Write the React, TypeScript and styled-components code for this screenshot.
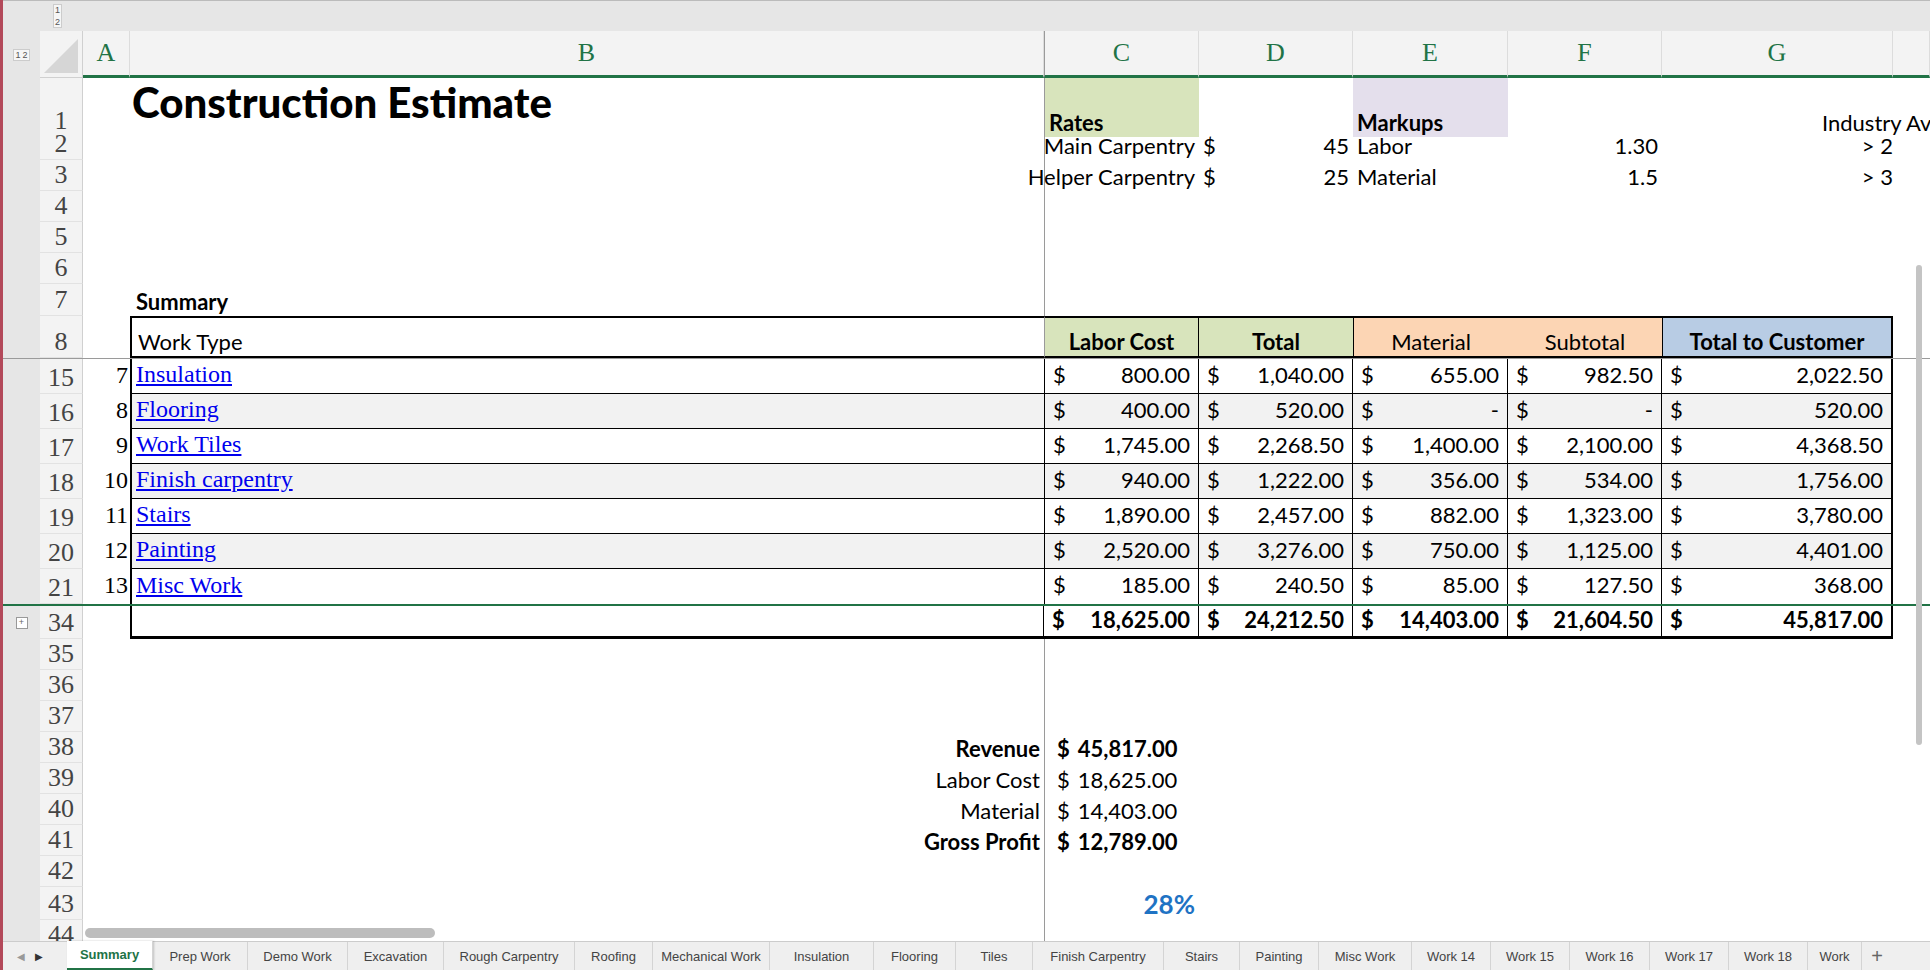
import React from "react";
import styled, { createGlobalStyle, css } from "styled-components";

const Global = createGlobalStyle`
  html, body { margin: 0; padding: 0; background: #fff; overflow: hidden; }
  body { font-family: Lato, "Liberation Sans", sans-serif; }
`;

const COLS = "37px 43px 47px 914px 155px 154px 155px 154px 231px 1fr";

const Page = styled.div`
  position: relative;
  width: 1930px;
  height: 970px;
  overflow: hidden;
  display: flex;
  flex-direction: column;
  border-left: 3px solid #b3495a;
  box-sizing: border-box;
`;

const TopBar = styled.div`
  height: 31px;
  flex: none;
  background: #e6e6e6;
  border-top: 1px solid #bbb;
  display: flex;
  align-items: center;
  padding-left: 50px;
  box-sizing: border-box;
`;

const LevelBox = styled.div<{ $col?: boolean }>`
  font: 9px "Liberation Sans", sans-serif;
  color: #555;
  display: flex;
  flex-direction: ${(p) => (p.$col ? "column" : "row")};
  border: 1px solid #ccc;
  background: #f6f6f6;
  line-height: 10px;
  padding: 0 1px;
  gap: 2px;
`;

const Row = styled.div<{ $h: number; $line?: string }>`
  display: grid;
  grid-template-columns: ${COLS};
  height: ${(p) => p.$h}px;
  flex: none;
  ${(p) => p.$line && css`border-bottom: ${p.$line};`}
`;

const Strip = styled.div`
  background: #e6e6e6;
  display: flex;
  align-items: center;
  justify-content: center;
`;

const RowNum = styled.div`
  background: #f3f3f3;
  border-right: 1px solid #d0d0d0;
  border-bottom: 1px solid #e2e2e2;
  font: 26px "Liberation Serif", serif;
  color: #444;
  display: flex;
  align-items: flex-end;
  justify-content: center;
  line-height: 1;
  padding-bottom: 2px;
  box-sizing: border-box;
  overflow: hidden;
`;

const ColHead = styled.div`
  background: #f3f3f3;
  border-right: 1px solid #dcdcdc;
  border-bottom: 3px solid #217346;
  font: 26px "Liberation Serif", serif;
  color: #217346;
  display: flex;
  align-items: center;
  justify-content: center;
  box-sizing: border-box;
`;

const Corner = styled.div`
  background: #f3f3f3;
  border-right: 1px solid #d0d0d0;
  border-bottom: 1px solid #d0d0d0;
  position: relative;
  box-sizing: border-box;
  &::after {
    content: "";
    position: absolute;
    right: 4px;
    bottom: 4px;
    border-left: 34px solid transparent;
    border-bottom: 34px solid #d6d6d6;
  }
`;

type CellP = {
  $bg?: string;
  $align?: "left" | "right" | "center" | "between";
  $bold?: boolean;
  $size?: number;
  $l?: string;
  $r?: string;
  $t?: string;
  $b?: string;
  $freeze?: boolean;
  $color?: string;
  $valign?: "end" | "center";
  $pad?: number;
  $gap?: number;
};

const Cell = styled.div<CellP>`
  position: relative;
  background: ${(p) => p.$bg || "transparent"};
  font-size: ${(p) => p.$size || 22}px;
  font-weight: ${(p) => (p.$bold ? 700 : 400)};
  color: ${(p) => p.$color || "#000"};
  display: flex;
  gap: ${(p) => p.$gap ?? 0}px;
  align-items: ${(p) => (p.$valign === "center" ? "center" : "flex-end")};
  justify-content: ${(p) =>
    p.$align === "right" ? "flex-end" : p.$align === "center" ? "center" : p.$align === "between" ? "space-between" : "flex-start"};
  padding: 0 ${(p) => p.$pad ?? 6}px 3px;
  white-space: nowrap;
  box-sizing: border-box;
  line-height: 1;
  border-left: ${(p) => p.$l || (p.$freeze ? "1px solid #9a9a9a" : "none")};
  border-right: ${(p) => p.$r || "none"};
  border-top: ${(p) => p.$t || "none"};
  border-bottom: ${(p) => p.$b || "none"};
`;

const Title = styled.span`
  font-size: 42px;
  font-weight: 900;
  line-height: 1.15;
  padding-bottom: 8px;
`;

const Link = styled.a`
  font: 24px "Liberation Serif", serif;
  color: #0000ee;
  text-decoration: underline;
`;

const Idx = styled.span`
  font: 24px "Liberation Serif", serif;
`;

const Body = styled.div`
  flex: 1;
  overflow: hidden;
  display: flex;
  flex-direction: column;
`;

const TabBar = styled.div`
  height: 28px;
  flex: none;
  background: #efefef;
  border-top: 1px solid #ccc;
  display: flex;
  align-items: stretch;
  font: 13px "Liberation Sans", sans-serif;
  color: #444;
`;

const Arrows = styled.div`
  width: 64px;
  display: flex;
  align-items: center;
  gap: 10px;
  padding-left: 14px;
  box-sizing: border-box;
  color: #999;
  font-size: 10px;
`;

const Tab = styled.div<{ $w: number; $active?: boolean }>`
  width: ${(p) => p.$w}px;
  flex: none;
  display: flex;
  align-items: center;
  justify-content: center;
  border-right: 1px solid #d4d4d4;
  box-sizing: border-box;
  overflow: hidden;
  white-space: nowrap;
  ${(p) =>
    p.$active &&
    css`
      background: #fff;
      color: #217346;
      font-weight: 700;
      margin-top: -1px;
      border-bottom: 2px solid #217346;
      box-shadow: 1px 0 2px rgba(0, 0, 0, 0.2);
    `}
`;

const Plus = styled.div`
  width: 30px;
  display: flex;
  align-items: center;
  justify-content: center;
  font-size: 20px;
  color: #666;
`;

const VScroll = styled.div`
  position: absolute;
  right: 8px;
  top: 265px;
  width: 6px;
  height: 480px;
  border-radius: 3px;
  background: #c4c4c4;
`;

const HScroll = styled.div`
  position: absolute;
  left: 82px;
  top: 928px;
  width: 350px;
  height: 10px;
  border-radius: 5px;
  background: #bdbdbd;
`;

const GroupBtn = styled.div`
  width: 10px;
  height: 10px;
  border: 1px solid #999;
  font: 9px "Liberation Sans", sans-serif;
  line-height: 9px;
  text-align: center;
  color: #666;
  background: #fff;
`;

const THICK = "2px solid #000";
const THIN = "1px solid #000";

const data: [number, number, string, string[]][] = [
  [15, 7, "Insulation", ["800.00", "1,040.00", "655.00", "982.50", "2,022.50"]],
  [16, 8, "Flooring ", ["400.00", "520.00", "-  ", "-  ", "520.00"]],
  [17, 9, "Work Tiles", ["1,745.00", "2,268.50", "1,400.00", "2,100.00", "4,368.50"]],
  [18, 10, "Finish carpentry ", ["940.00", "1,222.00", "356.00", "534.00", "1,756.00"]],
  [19, 11, "Stairs ", ["1,890.00", "2,457.00", "882.00", "1,323.00", "3,780.00"]],
  [20, 12, "Painting", ["2,520.00", "3,276.00", "750.00", "1,125.00", "4,401.00"]],
  [21, 13, "Misc Work", ["185.00", "240.50", "85.00", "127.50", "368.00"]],
];

const tabs: [string, number][] = [
  ["Summary", 86], ["Prep Work", 95], ["Demo Work", 100], ["Excavation", 96], ["Rough Carpentry", 131],
  ["Roofing", 78], ["Mechanical Work", 117], ["Insulation", 104], ["Flooring", 82], ["Tiles", 77],
  ["Finish Carpentry", 131], ["Stairs", 76], ["Painting", 79], ["Misc Work", 93], ["Work 14", 79],
  ["Work 15", 79], ["Work 16", 80], ["Work 17", 79], ["Work 18", 79], ["Work", 54],
];

const Empty = ({ n, h = 31 }: { n: number; h?: number }) => (
  <Row $h={h}>
    <Strip />
    <RowNum>{n}</RowNum>
    <Cell />
    <Cell />
    <Cell $freeze />
    <Cell />
    <Cell />
    <Cell />
    <Cell />
    <Cell />
  </Row>
);

export default function App() {
  return (
    <Page>
      <Global />
      <TopBar>
        <LevelBox $col>
          <span>1</span>
          <span>2</span>
        </LevelBox>
      </TopBar>
      <Row $h={47}>
        <Strip>
          <LevelBox>
            <span>1</span>
            <span>2</span>
          </LevelBox>
        </Strip>
        <Corner />
        <ColHead>A</ColHead>
        <ColHead>B</ColHead>
        <ColHead style={{ borderLeft: "1px solid #9a9a9a" }}>C</ColHead>
        <ColHead>D</ColHead>
        <ColHead>E</ColHead>
        <ColHead>F</ColHead>
        <ColHead>G</ColHead>
        <ColHead />
      </Row>
      <Body>
        <Row $h={51}>
          <Strip />
          <RowNum>1</RowNum>
          <Cell />
          <Cell $valign="end" $pad={2}><Title>Construction Estimate</Title></Cell>
          <Cell $freeze $bg="#d8e4bc" $bold $pad={4}>Rates</Cell>
          <Cell />
          <Cell $bg="#e4dfec" $bold $pad={4}>Markups</Cell>
          <Cell />
          <Cell $pad={160}>Industry Averages</Cell>
          <Cell />
        </Row>
        <Row $h={31}>
          <Strip />
          <RowNum>2</RowNum>
          <Cell />
          <Cell />
          <Cell $freeze $align="right" $pad={4}>Main Carpentry</Cell>
          <Cell $align="between" $pad={4}><span>$</span><span>45</span></Cell>
          <Cell $pad={4}>Labor</Cell>
          <Cell $align="right" $pad={4}>1.30</Cell>
          <Cell $align="right" $pad={0}>&gt; 2</Cell>
          <Cell />
        </Row>
        <Row $h={31}>
          <Strip />
          <RowNum>3</RowNum>
          <Cell />
          <Cell />
          <Cell $freeze $align="right" $pad={4}>Helper Carpentry</Cell>
          <Cell $align="between" $pad={4}><span>$</span><span>25</span></Cell>
          <Cell $pad={4}>Material</Cell>
          <Cell $align="right" $pad={4}>1.5</Cell>
          <Cell $align="right" $pad={0}>&gt; 3</Cell>
          <Cell />
        </Row>
        <Empty n={4} />
        <Empty n={5} />
        <Empty n={6} />
        <Row $h={32}>
          <Strip />
          <RowNum>7</RowNum>
          <Cell />
          <Cell $bold $size={22}>Summary</Cell>
          <Cell $freeze />
          <Cell />
          <Cell />
          <Cell />
          <Cell />
          <Cell />
        </Row>
        <Row $h={42} $line="1px solid #9a9a9a">
          <Strip />
          <RowNum>8</RowNum>
          <Cell />
          <Cell $l={THICK} $t={THICK} $b={THICK}>Work Type</Cell>
          <Cell $freeze $bg="#d8e4bc" $bold $align="center" $t={THICK} $b={THICK} $r={THIN}>Labor Cost</Cell>
          <Cell $bg="#d8e4bc" $bold $align="center" $t={THICK} $b={THICK}>Total</Cell>
          <Cell $bg="#fcd5b4" $align="center" $t={THICK} $b={THICK} $l={THIN}>Material</Cell>
          <Cell $bg="#fcd5b4" $align="center" $t={THICK} $b={THICK}>Subtotal</Cell>
          <Cell $bg="#b8cce4" $bold $align="center" $t={THICK} $b={THICK} $l={THIN} $r={THICK}>Total to Customer</Cell>
          <Cell />
        </Row>
        {data.map(([n, i, name, vals], k) => {
          const bg = k % 2 === 1 ? "#f2f2f2" : undefined;
          const last = k === data.length - 1;
          return (
            <Row key={n} $h={35} $line={last ? "2px solid #217346" : undefined}>
              <Strip />
              <RowNum>{n}</RowNum>
              <Cell $align="right" $pad={2} $valign="center"><Idx>{i}</Idx></Cell>
              <Cell $l={THICK} $bg={bg} $b={last ? "none" : THIN} $pad={4} $valign="center"><Link>{name}</Link></Cell>
              {vals.map((v, j) => (
                <Cell key={j} $align="between" $bg={bg} $b={last ? "none" : THIN} $r={j === 4 ? THICK : THIN} $l={j === 0 ? THIN : undefined} $pad={8} $valign="center">
                  <span>$</span>
                  <span>{v}</span>
                </Cell>
              ))}
              <Cell />
            </Row>
          );
        })}
        <Row $h={33}>
          <Strip><GroupBtn>+</GroupBtn></Strip>
          <RowNum>34</RowNum>
          <Cell />
          <Cell $l={THICK} $b={"3px solid #000"} $r={THIN} />
          {["18,625.00", "24,212.50", "14,403.00", "21,604.50", "45,817.00"].map((v, j) => (
            <Cell key={j} $align="between" $bold $b={"3px solid #000"} $r={j === 4 ? THICK : THIN} $pad={8} $valign="center">
              <span>$</span>
              <span>{v}</span>
            </Cell>
          ))}
          <Cell />
        </Row>
        <Empty n={35} />
        <Empty n={36} />
        <Empty n={37} />
        {([
          [38, "Revenue", "45,817.00", true],
          [39, "Labor Cost", "18,625.00", false],
          [40, "Material", "14,403.00", false],
          [41, "Gross Profit", "12,789.00", true],
        ] as [number, string, string, boolean][]).map(([n, l, v, b]) => (
          <Row key={n} $h={31}>
            <Strip />
            <RowNum>{n}</RowNum>
            <Cell />
            <Cell $align="right" $bold={b} $pad={4}>{l}</Cell>
            <Cell $freeze $bold={b} $pad={12} $gap={8}>
              <span>$</span>
              <span>{v}</span>
            </Cell>
            <Cell />
            <Cell />
            <Cell />
            <Cell />
            <Cell />
          </Row>
        ))}
        <Empty n={42} />
        <Row $h={33}>
          <Strip />
          <RowNum>43</RowNum>
          <Cell />
          <Cell />
          <Cell $freeze $align="right" $bold $color="#1f73c4" $size={26} $pad={4}>28%</Cell>
          <Cell />
          <Cell />
          <Cell />
          <Cell />
          <Cell />
        </Row>
        <Empty n={44} />
        <Empty n={45} />
      </Body>
      <TabBar>
        <Arrows>
          <span>◀</span>
          <span style={{ color: "#333" }}>▶</span>
        </Arrows>
        {tabs.map(([t, w], i) => (
          <Tab key={t} $w={w} $active={i === 0}>{t}</Tab>
        ))}
        <Plus>+</Plus>
      </TabBar>
      <VScroll />
      <HScroll />
    </Page>
  );
}
